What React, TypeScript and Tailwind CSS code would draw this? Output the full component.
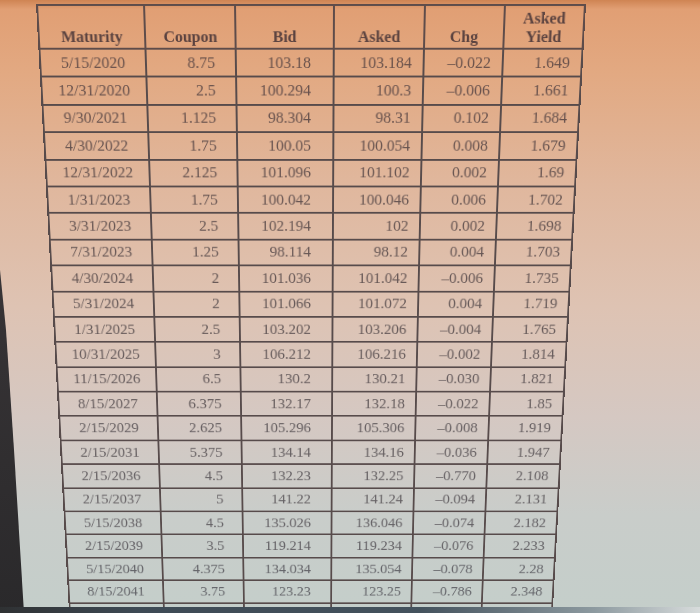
// Treasury quotes table, photographed at an angle

const rows: string[][] = [
  ["5/15/2020", "8.75", "103.18", "103.184", "–0.022", "1.649"],
  ["12/31/2020", "2.5", "100.294", "100.3", "–0.006", "1.661"],
  ["9/30/2021", "1.125", "98.304", "98.31", "0.102", "1.684"],
  ["4/30/2022", "1.75", "100.05", "100.054", "0.008", "1.679"],
  ["12/31/2022", "2.125", "101.096", "101.102", "0.002", "1.69"],
  ["1/31/2023", "1.75", "100.042", "100.046", "0.006", "1.702"],
  ["3/31/2023", "2.5", "102.194", "102", "0.002", "1.698"],
  ["7/31/2023", "1.25", "98.114", "98.12", "0.004", "1.703"],
  ["4/30/2024", "2", "101.036", "101.042", "–0.006", "1.735"],
  ["5/31/2024", "2", "101.066", "101.072", "0.004", "1.719"],
  ["1/31/2025", "2.5", "103.202", "103.206", "–0.004", "1.765"],
  ["10/31/2025", "3", "106.212", "106.216", "–0.002", "1.814"],
  ["11/15/2026", "6.5", "130.2", "130.21", "–0.030", "1.821"],
  ["8/15/2027", "6.375", "132.17", "132.18", "–0.022", "1.85"],
  ["2/15/2029", "2.625", "105.296", "105.306", "–0.008", "1.919"],
  ["2/15/2031", "5.375", "134.14", "134.16", "–0.036", "1.947"],
  ["2/15/2036", "4.5", "132.23", "132.25", "–0.770", "2.108"],
  ["2/15/2037", "5", "141.22", "141.24", "–0.094", "2.131"],
  ["5/15/2038", "4.5", "135.026", "136.046", "–0.074", "2.182"],
  ["2/15/2039", "3.5", "119.214", "119.234", "–0.076", "2.233"],
  ["5/15/2040", "4.375", "134.034", "135.054", "–0.078", "2.28"],
  ["8/15/2041", "3.75", "123.23", "123.25", "–0.786", "2.348"],
  ["", "", "", "", "", ""],
];

const cellPad = ["text-center", "text-right pr-[20px]", "text-right pr-[22px]", "text-right pr-[11px]", "text-right pr-[11px]", "text-right pr-[11px]"];

// brown ink at the top of the sheet fading to grey at the bottom
function ink(i: number) {
  const t = i / (rows.length - 1);
  const a = [104, 80, 74];
  const b = [100, 102, 108];
  const c = a.map((v, k) => Math.round(v + (b[k] - v) * t));
  return `rgb(${c[0]},${c[1]},${c[2]})`;
}

export default function App() {
  return (
    <div className="relative h-[613px] w-[700px] overflow-hidden bg-[linear-gradient(180deg,#cf8453_0%,#e19f74_1.5%,#e2a982_12%,#e0b79d_30%,#dec3b3_50%,#d5c8c2_68%,#c9cdca_84%,#c4ceca_100%)] font-['Liberation_Serif',serif]">
      {/* dark screen bezel on the lower left */}
      <div className="absolute inset-0 bg-[linear-gradient(180deg,#6a625e_0%,#3a3638_35%,#2a292b_100%)] [clip-path:polygon(0_270px,6px_330px,14px_450px,24px_613px,0_613px)]" />

      <div className="ml-[36px] mt-[4px] w-[548px] origin-top [transform:perspective(1000px)_rotateX(-11.2deg)]">
        <table className="w-[548px] table-fixed border-collapse border-2 border-[#5e4c4a] text-[16px]">
          <colgroup>
            <col className="w-[107px]" />
            <col className="w-[91px]" />
            <col className="w-[99px]" />
            <col className="w-[91px]" />
            <col className="w-[80px]" />
            <col className="w-[80px]" />
          </colgroup>
          <thead>
            <tr className="h-[45px] font-bold text-[#5a423f]">
              {["Maturity", "Coupon", "Bid", "Asked", "Chg"].map((h) => (
                <th key={h} className="border-2 border-[#5e4c4a] pb-[2px] align-bottom leading-[19px]">
                  {h}
                </th>
              ))}
              <th className="border-2 border-[#5e4c4a] pb-[2px] align-bottom leading-[19px]">
                Asked
                <br />
                Yield
              </th>
            </tr>
          </thead>
          <tbody>
            {rows.map((r, i) => (
              <tr key={i} className="h-[29.4px]" style={{ color: ink(i) }}>
                {r.map((v, j) => (
                  <td key={j} className={`border-2 border-[#574b4b] leading-none ${cellPad[j]}`}>
                    {v}
                  </td>
                ))}
              </tr>
            ))}
          </tbody>
        </table>
      </div>

      {/* bottom edge of the photo */}
      <div className="absolute bottom-0 left-0 h-[6px] w-full bg-[linear-gradient(90deg,#2f3133_0%,#3e4a55_20%,#44525d_60%,#8d9aa0_85%,#d8dcdc_100%)]" />
    </div>
  );
}
